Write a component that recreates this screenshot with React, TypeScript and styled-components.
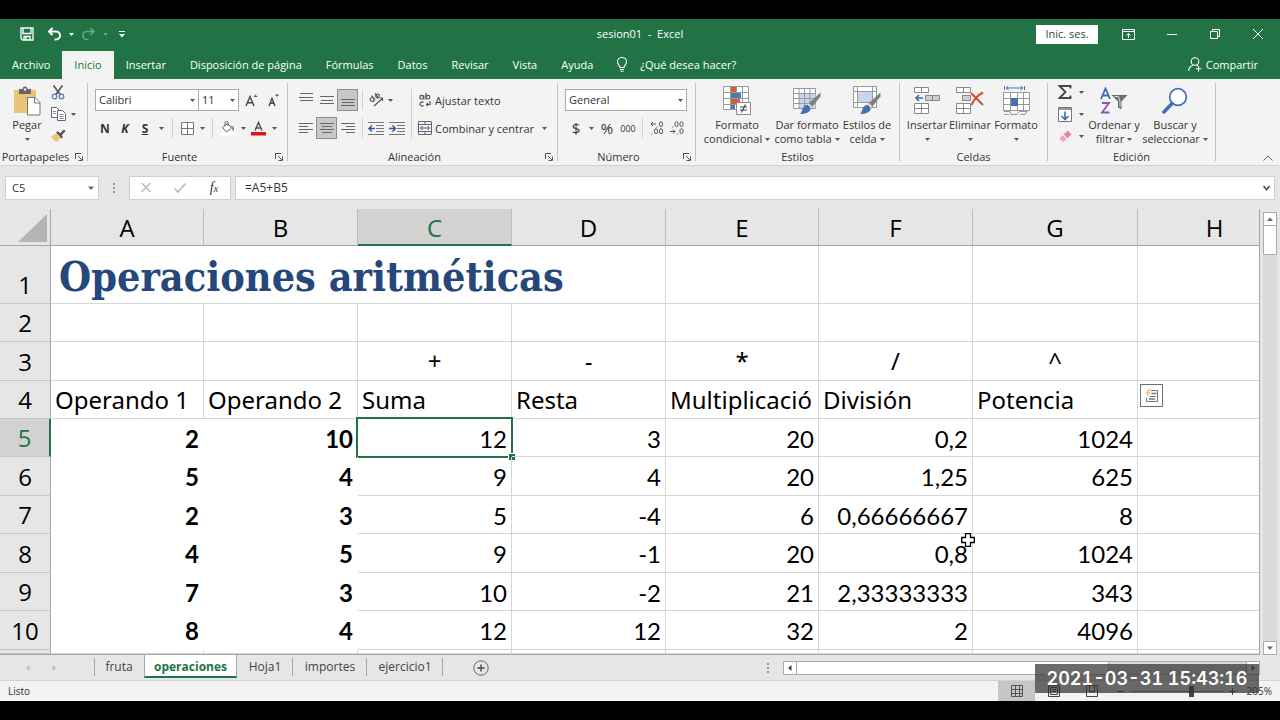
import React from "react";
import styled, { createGlobalStyle, css } from "styled-components";

const UI = `"Open Sans", "Noto Sans", sans-serif`;
const GREEN = "#217346";
const LINE = "#d6d6d6";
const EDGE = "#a6a6a6";

const GlobalStyle = createGlobalStyle`
  * { box-sizing: border-box; }
  html, body { margin: 0; padding: 0; background: #000; }
  body { font-family: ${UI}; font-size: 11px; color: #333; }
  button, input, select { font: inherit; color: inherit; margin: 0; }
  button { background: none; border: 0; padding: 0; cursor: default; white-space: nowrap; }
  svg { display: block; flex: none; }
`;

const Screen = styled.div`
  position: relative;
  display: flex;
  flex-direction: column;
  min-height: 100vh;
  padding: 19px 0;
  background: #000;
`;

/* ---------- title bar and tabs ---------- */

const TitleBar = styled.header`
  display: grid;
  grid-template-columns: 1fr auto 1fr;
  align-items: center;
  height: 32px;
  padding-bottom: 2px;
  background: ${GREEN};
  color: #fff;
`;

const QuickAccess = styled.div`
  display: flex;
  align-items: center;
  padding-left: 17px;
`;

const DocTitle = styled.h1`
  margin: 0;
  padding-bottom: 2px;
  font-size: 11px;
  font-weight: 400;
  white-space: pre;
`;

const WindowControls = styled.div`
  display: flex;
  align-items: center;
  justify-content: flex-end;
`;

const IconButton = styled.button<{ $w?: number; $h?: number; $on?: boolean; $dim?: boolean }>`
  display: flex;
  align-items: center;
  justify-content: center;
  flex: none;
  width: ${(p) => p.$w ?? 20}px;
  height: ${(p) => p.$h ?? 22}px;
  opacity: ${(p) => (p.$dim ? 0.35 : 1)};
  ${(p) =>
    p.$on &&
    css`
      background: #c8c8c8;
      border: 1px solid #8f8f8f;
    `}
`;

const SignIn = styled.button`
  width: 62px;
  height: 19px;
  margin-right: 8px;
  padding-bottom: 2px;
  background: #fff;
  color: #2b4a39;
`;

const TabBar = styled.nav`
  display: flex;
  align-items: stretch;
  height: 28px;
  background: ${GREEN};
  color: #fff;
`;

const Tab = styled.button<{ $active?: boolean }>`
  padding: 0 12px 2px;
  background: ${(p) => (p.$active ? "#f3f3f3" : "transparent")};
  color: ${(p) => (p.$active ? GREEN : "#fff")};
`;

const TellMe = styled.button`
  display: flex;
  align-items: center;
  gap: 12px;
  padding: 0 0 2px 11px;
`;

const Share = styled.button`
  display: flex;
  align-items: center;
  gap: 4px;
  margin-left: auto;
  padding: 0 22px 2px 0;
`;

/* ---------- ribbon ---------- */

const Ribbon = styled.div`
  display: flex;
  align-items: stretch;
  height: 87px;
  padding: 4px 0 4px;
  background: #f3f3f3;
  border-bottom: 1px solid #d2d2d2;
`;

const Group = styled.section<{ $w: number }>`
  display: flex;
  flex-direction: column;
  flex: none;
  width: ${(p) => p.$w}px;
  border-right: 1px solid #c4c4c4;
`;

const GroupBody = styled.div<{ $pad?: number }>`
  display: flex;
  flex: 1;
  min-height: 0;
  padding-left: ${(p) => p.$pad ?? 6}px;
`;

const GroupFooter = styled.div<{ $launcher?: boolean }>`
  display: grid;
  grid-template-columns: ${(p) => (p.$launcher ? "1fr 16px" : "1fr")};
  align-items: center;
  flex: none;
  height: 14px;
  margin-bottom: -3px;
  text-align: center;
  line-height: 14px;
  white-space: nowrap;
`;

const LauncherButton = styled.button`
  display: flex;
  justify-content: center;
`;

const Rows = styled.div`
  display: flex;
  flex-direction: column;
  gap: 6px;
  padding-top: 6px;
`;

const Row = styled.div`
  display: flex;
  align-items: center;
  height: 22px;
`;

const Tools = styled.div`
  display: flex;
  flex-direction: column;
  margin-top: -2px;
`;

const Divider = styled.span<{ $w?: number; $h?: number }>`
  display: flex;
  flex: none;
  justify-content: center;
  width: ${(p) => p.$w ?? 10}px;
  height: ${(p) => p.$h ?? 20}px;
  &::before {
    content: "";
    width: 1px;
    height: 100%;
    background: #d0d0d0;
  }
`;

const BigButton = styled.button<{ $w: number }>`
  display: flex;
  flex-direction: column;
  align-items: center;
  flex: none;
  width: ${(p) => p.$w}px;
  padding-top: 2px;
  line-height: 14px;
`;

const BigIcon = styled.span`
  display: flex;
  align-items: center;
  justify-content: center;
  height: 31px;
  margin-bottom: 2px;
`;

const BigLine = styled.span`
  display: flex;
  align-items: center;
  gap: 3px;
  height: 14px;
`;

const TextButton = styled.button`
  display: flex;
  align-items: center;
  height: 22px;
`;

const SelectBox = styled.span<{ $w: number }>`
  position: relative;
  display: flex;
  align-items: center;
  width: ${(p) => p.$w}px;
  height: 22px;
  & > svg {
    position: absolute;
    right: 4px;
    pointer-events: none;
  }
  & + & {
    margin-left: -1px;
  }
`;

const Select = styled.select`
  appearance: none;
  width: 100%;
  height: 100%;
  padding: 0 3px 2px;
  background: #fff;
  border: 1px solid #ababab;
  border-radius: 0;
`;

const Letter = styled.span<{ $italic?: boolean; $underline?: boolean }>`
  font-size: 12px;
  font-weight: 700;
  font-style: ${(p) => (p.$italic ? "italic" : "normal")};
  text-decoration: ${(p) => (p.$underline ? "underline" : "none")};
`;

const Currency = styled.span`
  font-size: 15px;
`;

const Thousands = styled.span`
  font-size: 9px;
`;

const Collapse = styled.button`
  align-self: flex-end;
  margin-left: auto;
  padding-right: 7px;
`;

/* ---------- formula bar ---------- */

const FormulaBar = styled.div`
  display: flex;
  align-items: center;
  height: 43px;
  padding: 0 5px;
  background: #e6e6e6;
`;

const Field = styled.label<{ $w?: number }>`
  display: flex;
  align-items: center;
  flex: ${(p) => (p.$w ? "none" : "1")};
  width: ${(p) => (p.$w ? p.$w + "px" : "auto")};
  height: 24px;
  padding-right: 4px;
  background: #fff;
  border: 1px solid #cfcfcf;
`;

const FieldInput = styled.input<{ $pad: number; $size: number }>`
  flex: 1;
  min-width: 0;
  padding: 0 0 0 ${(p) => p.$pad}px;
  border: 0;
  background: transparent;
  font-size: ${(p) => p.$size}px;
  outline: none;
`;

const Dots = styled.span`
  display: flex;
  flex: none;
  justify-content: center;
  width: 30px;
`;

const FxBox = styled.div`
  display: flex;
  align-items: center;
  flex: none;
  width: 102px;
  height: 24px;
  margin-right: 4px;
  background: #fff;
  border: 1px solid #cfcfcf;
`;

const FxText = styled.span`
  font-family: "Liberation Serif", serif;
  font-size: 14px;
  font-style: italic;
  & > small {
    font-size: 10px;
  }
`;

/* ---------- sheet ---------- */

const SheetArea = styled.main`
  display: flex;
  flex: 1;
  background: #e6e6e6;
`;

const Pane = styled.div`
  position: relative;
  flex: 1;
  min-width: 0;
  overflow: hidden;
  background: #fff;
  border-right: 1px solid ${EDGE};
  border-bottom: 1px solid ${EDGE};
`;

const Sheet = styled.table`
  width: 100%;
  min-width: 1292px;
  table-layout: fixed;
  border-collapse: separate;
  border-spacing: 0;
  color: #000;
  font-size: 24px;
  line-height: 30px;
`;

const Col = styled.col<{ $w?: number }>`
  width: ${(p) => (p.$w ? p.$w + "px" : "auto")};
`;

const SheetRow = styled.tr<{ $h: number }>`
  height: ${(p) => p.$h}px;
`;

const Corner = styled.td`
  padding: 0 3px 3px 0;
  vertical-align: bottom;
  background: #e6e6e6;
  border-right: 1px solid ${EDGE};
  border-bottom: 1px solid ${EDGE};
  & > svg {
    margin-left: auto;
  }
`;

const ColHead = styled.th<{ $on?: boolean }>`
  padding: 2px 0 0;
  font-weight: 400;
  background: ${(p) => (p.$on ? "#d2d2d2" : "#e6e6e6")};
  color: ${(p) => (p.$on ? GREEN : "#000")};
  border-right: 1px solid #bcbcbc;
  border-bottom: ${(p) => (p.$on ? `2px solid ${GREEN}` : `1px solid ${EDGE}`)};
`;

const RowHead = styled.th<{ $on?: boolean }>`
  padding: 0 0 3px;
  vertical-align: bottom;
  font-weight: 400;
  background: ${(p) => (p.$on ? "#d2d2d2" : "#e6e6e6")};
  color: ${(p) => (p.$on ? GREEN : "#000")};
  border-bottom: 1px solid #c6c6c6;
  border-right: ${(p) => (p.$on ? `2px solid ${GREEN}` : `1px solid ${EDGE}`)};
`;

const Cell = styled.td<{ $align?: string; $bold?: boolean; $filled?: boolean }>`
  position: relative;
  padding: 0 4px;
  font-family: "Noto Sans", sans-serif;
  text-align: ${(p) => p.$align ?? "left"};
  font-weight: ${(p) => (p.$bold ? 700 : 400)};
  white-space: nowrap;
  border-right: 1px solid ${(p) => (p.$filled ? "#fff" : LINE)};
  border-bottom: 1px solid ${(p) => (p.$filled ? "#fff" : LINE)};
`;

const NumberCell = styled(Cell)`
  padding-top: 2px;
  font-family: Lato, "Noto Sans", sans-serif;
`;

const TitleCell = styled.td`
  padding: 5px 0 0 8px;
  color: #26477c;
  font-family: "DejaVu Serif Condensed", "DejaVu Serif", serif;
  font-size: 41px;
  font-weight: 700;
  line-height: 52px;
  white-space: nowrap;
  border-right: 1px solid ${LINE};
  border-bottom: 1px solid ${LINE};
`;

const Selection = styled.span`
  position: absolute;
  inset: -2px;
  border: 2px solid ${GREEN};
  &::after {
    content: "";
    position: absolute;
    right: -4px;
    bottom: -4px;
    width: 6px;
    height: 6px;
    background: ${GREEN};
    border: 1px solid #fff;
    border-width: 1px 0 0 1px;
  }
`;

const QuickAnalysis = styled.button`
  position: absolute;
  top: 3px;
  left: 2px;
  display: flex;
  align-items: center;
  justify-content: center;
  width: 23px;
  height: 23px;
  background: #fff;
  border: 1px solid #5d7869;
`;

const Pointer = styled.span`
  position: absolute;
  left: 961px;
  top: 324px;
`;

const VScroll = styled.div`
  display: flex;
  flex-direction: column;
  flex: none;
  width: 20px;
  padding: 3px 3px 0;
`;

const ScrollButton = styled.button`
  display: flex;
  align-items: center;
  justify-content: center;
  flex: none;
  width: 14px;
  height: 14px;
  background: #fff;
  border: 1px solid #ababab;
`;

const VTrack = styled.div`
  flex: 1;
  background: #dadada;
`;

const VThumb = styled.div`
  height: 29px;
  background: #fff;
  border: 1px solid #ababab;
  border-top: 0;
`;

/* ---------- sheet tabs and status ---------- */

const SheetTabs = styled.div`
  display: flex;
  height: 25px;
  background: #e6e6e6;
  font-size: 12px;
  color: #444;
`;

const TabArrows = styled.div`
  display: flex;
  align-items: center;
  flex: none;
  width: 94px;
  padding-left: 18px;
`;

const SheetTab = styled.button<{ $w: number; $active?: boolean; $first?: boolean }>`
  flex: none;
  width: ${(p) => p.$w}px;
  height: 23px;
  ${(p) =>
    p.$active
      ? css`
          padding-top: 2px;
          background: #fff;
          color: ${GREEN};
          font-weight: 700;
          border-bottom: 2px solid ${GREEN};
          border-left: 1px solid ${EDGE};
          border-right: 1px solid ${EDGE};
        `
      : css`
          background: linear-gradient(#a6a6a6, #a6a6a6) ${p.$first ? "left" : "right"} center / 1px 18px no-repeat;
        `}
`;

const AddSheet = styled.button`
  width: 76px;
  display: flex;
  align-items: center;
  justify-content: center;
`;

const SplitDots = styled.span`
  display: flex;
  align-items: center;
  margin-left: auto;
  padding-right: 14px;
`;

const HScroll = styled.div`
  display: flex;
  align-items: center;
  flex: none;
  width: 477px;
  margin-right: 20px;
`;

const HTrack = styled.div`
  flex: 1;
  height: 14px;
  background: #dadada;
  border: solid #ababab;
  border-width: 1px 0;
`;

const HThumb = styled.div`
  width: 312px;
  height: 12px;
  background: #fff;
  border-right: 1px solid #ababab;
`;

const StatusBar = styled.footer`
  display: flex;
  align-items: center;
  height: 21px;
  padding: 0 8px;
  background: #f3f3f3;
  border-top: 1px solid #d2d2d2;
  font-size: 10px;
`;

const Views = styled.div`
  display: flex;
  margin-left: auto;
`;

const ViewButton = styled(IconButton)`
  background: ${(p) => (p.$on ? "#c6c6c6" : "transparent")};
  border: 0;
`;

const Zoom = styled.label`
  display: flex;
  align-items: center;
`;

const Slider = styled.input`
  appearance: none;
  width: 92px;
  height: 12px;
  margin: 0 2px;
  background: linear-gradient(#8a8a8a, #8a8a8a) center / 100% 1px no-repeat;
  &::-webkit-slider-thumb {
    appearance: none;
    width: 5px;
    height: 11px;
    background: #444;
  }
`;

const Percent = styled.span`
  width: 33px;
  text-align: right;
`;

const Stamp = styled.time`
  position: absolute;
  right: 21px;
  bottom: 27px;
  width: 224px;
  height: 29px;
  background: rgba(50, 50, 50, 0.72);
  color: #fff;
  font-family: Inter, "Open Sans", sans-serif;
  font-size: 18px;
  font-weight: 600;
  font-variant-numeric: tabular-nums;
  line-height: 29px;
  text-align: center;
  white-space: nowrap;
`;

/* ---------- drawings ---------- */

const Caret = ({ color = "#555" }: { color?: string }) => (
  <svg width="5" height="3" viewBox="0 0 5 3">
    <path d="M0 0h5L2.5 3z" fill={color} />
  </svg>
);

const Launcher = () => (
  <svg width="8" height="8" viewBox="0 0 8 8" fill="none" stroke="#555">
    <path d="M.5 6V.5H6M3 3l4 4M7.500 3.500v4h-4" />
  </svg>
);

const Lines = ({ rows, color = "#666" }: { rows: [number, number, number][]; color?: string }) => (
  <svg width="14" height="14" viewBox="0 0 14 14" stroke={color}>
    {rows.map(([y, a, b]) => (
      <path key={y} d={`M${a} ${y}.5H${b}`} />
    ))}
  </svg>
);

const SaveIcon = () => (
  <svg width="14" height="14" viewBox="0 0 14 14" fill="none" stroke="#fff" strokeWidth="1.300">
    <path d="M1 1h12v12H2.500L1 11.500zM3 1v5.500h8V1M4 13V9.500h6V13M6 10v2.500" />
  </svg>
);

const UndoIcon = () => (
  <svg width="15" height="14" viewBox="0 0 15 14" fill="none" stroke="#fff" strokeWidth="2">
    <path d="M5.500 1L2 4.500 5.500 8M2 4.500h7a4 4 0 0 1 0 8H7.500" />
  </svg>
);

const RedoIcon = () => (
  <svg width="15" height="14" viewBox="0 0 15 14" fill="none" stroke="#fff" strokeWidth="1.600">
    <path d="M9.500 1L13 4.500 9.500 8M13 4.500H6a4 4 0 0 0 0 8h1.500" />
  </svg>
);

const CustomizeIcon = () => (
  <svg width="6" height="7" viewBox="0 0 6 7" fill="#fff">
    <path d="M0 0h6v1H0zM0 3h6L3 6.500z" />
  </svg>
);

const RibbonOptions = () => (
  <svg width="13" height="11" viewBox="0 0 13 11" fill="none" stroke="#fff">
    <path d="M.5.5h12v10H.5zM.5 2.500h12M6.500 9V4.500M4.500 6.500l2-2 2 2" />
  </svg>
);

const Minimize = () => (
  <svg width="10" height="10" viewBox="0 0 10 10" stroke="#fff">
    <path d="M0 5.500h10" />
  </svg>
);

const Restore = () => (
  <svg width="10" height="10" viewBox="0 0 10 10" fill="none" stroke="#fff">
    <path d="M.5 2.500h7v7h-7zM2.500 2.500v-2h7v7h-2" />
  </svg>
);

const Close = () => (
  <svg width="10" height="10" viewBox="0 0 10 10" stroke="#fff">
    <path d="M0 0l10 10M10 0L0 10" />
  </svg>
);

const Bulb = () => (
  <svg width="12" height="15" viewBox="0 0 12 15" fill="none" stroke="#fff" strokeWidth="1.100">
    <path d="M4 10.500C4 8.500 1.500 7.500 1.500 4.800a4.500 4.300 0 0 1 9 0C10.500 7.500 8 8.500 8 10.500zM4 12.500h4M4.500 14.200h3" />
  </svg>
);

const Person = () => (
  <svg width="14" height="15" viewBox="0 0 14 15" fill="none" stroke="#fff" strokeWidth="1.100">
    <circle cx="7" cy="4.500" r="3.800" />
    <path d="M.7 14c0-3 1.800-5 4.300-5.800M9 8.200l1 .6M10.500 9v5.500M7.800 11.800h5.500" />
  </svg>
);

const PasteIcon = () => (
  <svg width="28" height="30" viewBox="0 0 28 30">
    <path d="M1 4h22v23H1z" fill="#e9c47a" />
    <path d="M6 3h3.500a2.500 2.500 0 0 1 5 0H18v5H6z" fill="#666" />
    <circle cx="12" cy="3.500" r="1.200" fill="#f3f3f3" />
    <path d="M14.500 11.500h7.500l5 5v12.500H14.500z" fill="#fff" stroke="#777" />
    <path d="M21.500 11.500v5.500H27" fill="none" stroke="#777" />
  </svg>
);

const CutIcon = () => (
  <svg width="14" height="15" viewBox="0 0 14 15" fill="none">
    <path d="M2.500.5l7 9.500M11.500.5l-7 9.500" stroke="#555" strokeWidth="1.600" />
    <circle cx="3.500" cy="11.500" r="2.300" stroke="#5b7aa5" strokeWidth="1.200" />
    <circle cx="10.500" cy="11.500" r="2.300" stroke="#5b7aa5" strokeWidth="1.200" />
  </svg>
);

const CopyIcon = () => (
  <svg width="15" height="14" viewBox="0 0 15 14" fill="#fff" stroke="#666">
    <path d="M.5.5h5l2.500 2.500v7.500H.5z" />
    <path d="M2 4.500h3M2 6.500h3" stroke="#6c8bb5" />
    <path d="M6.500 3.500h5l3 3v7h-8z" />
    <path d="M8.500 7.500h4M8.500 9.500h4M8.500 11.500h4" stroke="#6c8bb5" />
  </svg>
);

const BrushIcon = () => (
  <svg width="15" height="13" viewBox="0 0 15 13">
    <path d="M0 7.500l5-3 4.500 5L6 13C3.500 12 1.500 10 0 7.500z" fill="#e9c47a" />
    <path d="M5 3.500l1.800-1.300L9 4.200 13 .5l1.500 1.800-3.700 3.700 1.200 2.200-1.700 1.300z" fill="#555" />
  </svg>
);

const GrowFont = ({ up }: { up?: boolean }) => (
  <svg width="14" height="15" viewBox="0 0 14 15" fill="none">
    <path
      d={up ? "M1 13L5 3.500 9 13M2.500 9.700h5" : "M2 13l3-7.500L8 13M3 10.300h4"}
      stroke="#444"
      strokeWidth="1.400"
    />
    <path d={up ? "M8.500 4l2-2.500 2 2.500z" : "M8 1.500h4L10 4z"} fill={up ? "#44638f" : "#555"} />
  </svg>
);

const BorderIcon = () => (
  <svg width="13" height="13" viewBox="0 0 13 13" fill="#fff" stroke="#777">
    <path d="M.5.5h12v12H.5zM6.500.5v12M.5 6.500h12" />
  </svg>
);

const FillIcon = () => (
  <svg width="16" height="15" viewBox="0 0 16 15" fill="none">
    <path d="M1 11h14v3.500H1z" fill="#fff" />
    <path d="M2.500 6.500l5-4 4 4.500-5 4z" fill="#fff" stroke="#666" />
    <path d="M5 5V1.500a1.500 1.500 0 0 1 3 0V5" stroke="#666" />
    <path d="M10.500 4.500c3 .5 4 2.500 3 5.500-1-.5-1.500-2-1-3.500z" fill="#44638f" />
  </svg>
);

const FontColorIcon = () => (
  <svg width="15" height="15" viewBox="0 0 15 15" fill="none">
    <path d="M4 9.500L7.500 1.500 11 9.500M5.200 7h4.600" stroke="#555" strokeWidth="1.500" />
    <path d="M0 11h15v3.500H0z" fill="#e0141e" />
  </svg>
);

const OrientIcon = () => (
  <svg width="15" height="14" viewBox="0 0 15 14" fill="none" stroke="#555" strokeWidth="1.200">
    <circle cx="3.200" cy="6.500" r="2" />
    <path d="M2.500 2.500l3.500 4.500M6 .3l3.200 4.700" />
    <circle cx="8.500" cy="3" r="1.800" />
    <path d="M5 13l8.500-7.500M10.500 5h3v3" />
  </svg>
);

const IndentIcon = ({ out }: { out?: boolean }) => (
  <svg width="16" height="13" viewBox="0 0 16 13" fill="none">
    <path d="M0 .5h16M8 3.500h8M8 6.500h8M8 9.500h8M0 12.500h16" stroke="#777" />
    <path d={out ? "M7 6.500H1M4 3.500l-3 3 3 3" : "M0 6.500h6M3.500 3.500l3 3-3 3"} stroke="#355b94" strokeWidth="1.500" />
  </svg>
);

const WrapIcon = () => (
  <svg width="12" height="14" viewBox="0 0 12 14" fill="none" stroke="#555" strokeWidth="1.200">
    <circle cx="2.700" cy="4.200" r="1.800" />
    <path d="M4.800 2.500v4M7 0v6.500" />
    <circle cx="9" cy="4.200" r="1.800" />
    <path d="M4.500 9.500a2 2 0 1 0 0 3M11 8v3.500H7.500M9 10l-1.500 1.500L9 13" />
  </svg>
);

const MergeIcon = () => (
  <svg width="14" height="14" viewBox="0 0 14 14" fill="none" stroke="#666">
    <path d="M.5.5h13v13H.5zM.5 3.500h13M.5 10.500h13M7 .5v3M7 10.500v3" />
    <path d="M2.500 7h9M4.500 5l-2 2 2 2M9.500 5l2 2-2 2" stroke="#355b94" />
  </svg>
);

const DecimalIcon = ({ more }: { more?: boolean }) => (
  <svg width="15" height="14" viewBox="0 0 15 14" fill="none" stroke="#555">
    {more ? (
      <>
        <path d="M6 3H1M3 1L1 3l2 2" stroke="#355b94" />
        <path d="M7 5.500l-.5 1M2 12.500l-.5 1" />
        <ellipse cx="11" cy="3.200" rx="1.600" ry="2.500" />
        <ellipse cx="6" cy="10.200" rx="1.600" ry="2.500" />
        <ellipse cx="11" cy="10.200" rx="1.600" ry="2.500" />
      </>
    ) : (
      <>
        <path d="M0 10.500h5M3 8.500l2 2-2 2" stroke="#355b94" />
        <path d="M3 5.500l-.5 1M8 12.500l-.5 1" />
        <ellipse cx="6.500" cy="3.200" rx="1.600" ry="2.500" />
        <ellipse cx="11.500" cy="3.200" rx="1.600" ry="2.500" />
        <ellipse cx="11.500" cy="10.200" rx="1.600" ry="2.500" />
      </>
    )}
  </svg>
);

const CondIcon = () => (
  <svg width="28" height="29" viewBox="0 0 28 29">
    <path d="M.5.5h25v23H.5z" fill="#fff" stroke="#999" />
    <path d="M7.500.5v23M13.500.5v23M19.500.5v23M.5 6.500h25M.5 12.500h25M.5 18.500h25" stroke="#999" />
    <path d="M8 1h5v5H8zM8 13h9v5H8z" fill="#d85c41" />
    <path d="M8 7h10v5H8zM8 19h4v4H8z" fill="#4f7cae" />
    <path d="M13.500 16.500h14v12h-14z" fill="#fff" stroke="#888" />
    <path d="M17 21h7M17 24h7M22.500 18.500l-4 8" stroke="#444" strokeWidth="1.200" />
  </svg>
);

const Brush = () => (
  <>
    <path d="M27.500 6.500v4l-8 10-3.500-3.500z" fill="#808080" />
    <path d="M15.500 17.500l3.500 3.500-1.500 2-4-4z" fill="#fff" stroke="#888" strokeWidth=".6" />
    <path d="M13.500 19c2.500 0 4.500 2 4 4.500-1.500 3.500-5.500 4.500-10.500 4.500 2.500-2 2-8 6.500-9z" fill="#4472b0" />
  </>
);

const TableIcon = () => (
  <svg width="28" height="29" viewBox="0 0 28 29">
    <path d="M.5 2.500h22v20H.5z" fill="#fff" stroke="#999" />
    <path d="M6 8h16.500v14H6z" fill="#c5d7ea" />
    <path d="M6 2.500v20M11.500 2.500v20M17 2.500v20M.5 7.500h22M.5 12.500h22M.5 17.500h22" stroke="#999" />
    <Brush />
  </svg>
);

const StyleIcon = () => (
  <svg width="28" height="29" viewBox="0 0 28 29">
    <path d="M.5.5h23v21H.5z" fill="#fff" stroke="#999" />
    <path d="M4.500.5v21M19.500.5v21M.5 5.500h23M.5 16.500h23" stroke="#999" />
    <path d="M5 6h14v10H5z" fill="#c5d7ea" />
    <Brush />
  </svg>
);

const InsertIcon = () => (
  <svg width="26" height="28" viewBox="0 0 26 28" fill="none" stroke="#888">
    <path d="M.5.500h14v5H.5zM7.500.500v5M.5 16.500h14v10H.5zM7.500 16.500v10M.5 21.500h14" fill="#fff" />
    <path d="M11.500 8.500h14v5h-14zM18.500 8.500v5" fill="#cfcfcf" />
    <path d="M9 11H2M5 8l-3 3 3 3" stroke="#3b6cb0" strokeWidth="1.600" />
  </svg>
);

const DeleteIcon = () => (
  <svg width="28" height="28" viewBox="0 0 28 28" fill="none" stroke="#888">
    <path d="M.5.500h14v5H.5zM7.500.500v5M.5 16.500h14v10H.5zM7.500 16.500v10M.5 21.500h14" fill="#fff" />
    <path d="M6.500 8.500h8v5h-8z" fill="#cfcfcf" />
    <path d="M15 6l12 12M27 5.500C22 8 18 12 15.500 18" stroke="#d14f32" strokeWidth="2" />
  </svg>
);

const FormatIcon = () => (
  <svg width="27" height="30" viewBox="0 0 27 30" fill="none" stroke="#999">
    <path d="M.5 6.500h26v18H.5z" fill="#fff" />
    <path d="M7.500 6.500v18M14.500 6.500v18M20.500 6.500v18M.5 12.500h26M.5 18.500h26" />
    <path d="M8 12h7v8H8z" fill="#4472b0" stroke="none" />
    <path d="M1.500 0v4M21.500 0v4M3 2h17M5.500 0L3 2l2.500 2M17.500 0L20 2l-2.500 2" stroke="#4472b0" />
    <path d="M1 25.500h6l1 3h6l2-3h8l-2 3h-5M1 28.500h5" />
  </svg>
);

const SigmaIcon = () => (
  <svg width="14" height="14" viewBox="0 0 14 14" fill="none" stroke="#444" strokeWidth="1.800">
    <path d="M12.500 3.500V1H1.500l6 6-6 6h11v-2.500" />
  </svg>
);

const FillDownIcon = () => (
  <svg width="14" height="15" viewBox="0 0 14 15" fill="#fff" stroke="#777">
    <path d="M.5.5h13v14H.5z" />
    <path d="M1 2h12" stroke="#999" strokeWidth="2" />
    <path d="M7 4.500v8M3.500 9L7 12.500 10.500 9" fill="none" stroke="#3b6cb0" strokeWidth="1.600" />
  </svg>
);

const EraserIcon = () => (
  <svg width="13" height="12" viewBox="0 0 13 12">
    <path d="M4.500 4.500L9 .5l3.500 4L8 8.500z" fill="#ec84a0" />
    <path d="M4 5l3.500 4L5 11.500H3L.5 8.500z" fill="#f0a6b8" />
    <path d="M4.300 4.700L8 9" stroke="#fff" />
  </svg>
);

const SortIcon = () => (
  <svg width="28" height="28" viewBox="0 0 28 28" fill="none">
    <path d="M1 12L5.500 1.500 10 12M2.500 8.500h6" stroke="#3f6fb5" strokeWidth="1.800" />
    <path d="M2 16h7L2 25.500h7.500" stroke="#8a55b8" strokeWidth="1.800" />
    <path d="M11.500 8h16l-6 6.500v8l-3.500-2v-6z" fill="#6e6e6e" />
    <path d="M14.500 9.500h4l1.500 5v5" stroke="#ddd" />
  </svg>
);

const FindIcon = () => (
  <svg width="26" height="27" viewBox="0 0 26 27" fill="none">
    <circle cx="16" cy="10" r="8.300" fill="#fff" stroke="#3f6fb5" strokeWidth="1.700" />
    <path d="M10 16.500L2 25" stroke="#3f6fb5" strokeWidth="3.500" strokeLinecap="round" />
  </svg>
);

const CollapseIcon = () => (
  <svg width="10" height="6" viewBox="0 0 10 6" fill="none" stroke="#666">
    <path d="M.5 5.500L5 1l4.500 4.500" />
  </svg>
);

const ExpandIcon = () => (
  <svg width="7" height="6" viewBox="0 0 7 6" fill="none" stroke="#555" strokeWidth="1.800">
    <path d="M.5 1l3 3.500L6.500 1" />
  </svg>
);

const DotsIcon = () => (
  <svg width="2" height="10" viewBox="0 0 2 10" fill="#999">
    <path d="M0 0h2v2H0zM0 4h2v2H0zM0 8h2v2H0z" />
  </svg>
);

const CancelIcon = () => (
  <svg width="10" height="9" viewBox="0 0 10 9" stroke="#bdbdbd" strokeWidth="1.400">
    <path d="M.5 0l9 9M9.500 0l-9 9" />
  </svg>
);

const AcceptIcon = () => (
  <svg width="12" height="10" viewBox="0 0 12 10" fill="none" stroke="#bdbdbd" strokeWidth="1.800">
    <path d="M.7 5.500L4 9l7.500-8.500" />
  </svg>
);

const CornerIcon = () => (
  <svg width="29" height="28" viewBox="0 0 29 28">
    <path d="M29 0v28H0z" fill="#b4b4b4" />
  </svg>
);

const AnalysisIcon = () => (
  <svg width="15" height="15" viewBox="0 0 15 15" fill="none">
    <path d="M7 2.500h6.500v11h-11V10" stroke="#777" />
    <path d="M5 .5L1 6h2.500L2 10l5-6H4.500L7 .5z" fill="#f0c48a" />
    <path d="M7.500 5.500h5" stroke="#777" strokeWidth="1.500" />
    <path d="M6 8.500h6" stroke="#c8553d" />
    <path d="M5 11h6" stroke="#3c8c86" strokeWidth="1.500" />
  </svg>
);

const CrossPointer = () => (
  <svg width="14" height="14" viewBox="0 0 14 14">
    <path d="M4.500.7h5v3.800h3.800v5H9.500v3.800h-5V9.500H.7v-5h3.800z" fill="#fff" stroke="#000" strokeWidth="1.300" />
  </svg>
);

const Triangle = ({ d, color = "#666" }: { d: string; color?: string }) => (
  <svg width="6" height="6" viewBox="0 0 6 6">
    <path d={d} fill={color} />
  </svg>
);
const UP = "M0 5h6L3 1.500z";
const DOWN = "M0 1.500h6L3 5z";
const LEFT = "M4.500 0v6L1 3z";
const RIGHT = "M1.500 0v6L5 3z";

const PlusCircle = () => (
  <svg width="16" height="16" viewBox="0 0 16 16" fill="none" stroke="#666">
    <circle cx="8" cy="8" r="7.200" />
    <path d="M8 4.500v7M4.500 8h7" strokeWidth="1.800" />
  </svg>
);

const NormalView = () => (
  <svg width="12" height="12" viewBox="0 0 12 12" fill="none" stroke="#555">
    <path d="M.5.5h11v11H.5zM4.500.5v11M8.500.5v11M.5 4.500h11M.5 8.500h11" />
  </svg>
);

const PageView = () => (
  <svg width="12" height="12" viewBox="0 0 12 12" fill="none" stroke="#444">
    <path d="M.5.5h11v11H.5zM2.500 2.500h7v7h-7zM4 4.500h4M4 6.500h4" />
  </svg>
);

const BreakView = () => (
  <svg width="12" height="12" viewBox="0 0 12 12" fill="none" stroke="#444">
    <path d="M.5.5h11v11H.5zM3.500.5v6h5v-6" />
  </svg>
);

const ZoomSign = ({ plus }: { plus?: boolean }) => (
  <svg width="7" height="7" viewBox="0 0 7 7" stroke="#444">
    <path d={plus ? "M0 3.500h7M3.500 0v7" : "M0 3.500h7"} />
  </svg>
);

/* ---------- parts ---------- */

const GroupBox = ({
  w,
  name,
  pad,
  launcher,
  children,
}: {
  w: number;
  name: string;
  pad?: number;
  launcher?: boolean;
  children: React.ReactNode;
}) => (
  <Group $w={w} aria-label={name}>
    <GroupBody $pad={pad}>{children}</GroupBody>
    <GroupFooter $launcher={launcher}>
      <span>{name}</span>
      {launcher && (
        <LauncherButton type="button" aria-label={`Configuración de ${name}`}>
          <Launcher />
        </LauncherButton>
      )}
    </GroupFooter>
  </Group>
);

const Big = ({ w, icon, lines }: { w: number; icon: React.ReactNode; lines: [string, string] }) => (
  <BigButton type="button" $w={w}>
    <BigIcon>{icon}</BigIcon>
    <BigLine>{lines[0]}</BigLine>
    <BigLine>
      {lines[1]}
      <Caret />
    </BigLine>
  </BigButton>
);

const Drop = ({ w, label, h }: { w: number; label: string; h?: number }) => (
  <IconButton type="button" $w={w} $h={h} aria-label={label}>
    <Caret />
  </IconButton>
);

/* ---------- data ---------- */

const TABS = [
  "Archivo",
  "Inicio",
  "Insertar",
  "Disposición de página",
  "Fórmulas",
  "Datos",
  "Revisar",
  "Vista",
  "Ayuda",
];

const COLUMNS: { name: string; w?: number }[] = [
  { name: "A", w: 153 },
  { name: "B", w: 154 },
  { name: "C", w: 154 },
  { name: "D", w: 154 },
  { name: "E", w: 153 },
  { name: "F", w: 154 },
  { name: "G", w: 165 },
  { name: "H" },
];

const DATA: { n: number; h: number; v: string[] }[] = [
  { n: 5, h: 38, v: ["2", "10", "12", "3", "20", "0,2", "1024"] },
  { n: 6, h: 39, v: ["5", "4", "9", "4", "20", "1,25", "625"] },
  { n: 7, h: 38, v: ["2", "3", "5", "-4", "6", "0,66666667", "8"] },
  { n: 8, h: 39, v: ["4", "5", "9", "-1", "20", "0,8", "1024"] },
  { n: 9, h: 38, v: ["7", "3", "10", "-2", "21", "2,33333333", "343"] },
  { n: 10, h: 39, v: ["8", "4", "12", "12", "32", "2", "4096"] },
];

const OPERATORS = ["", "", "+", "-", "*", "/", "^"];
const HEADINGS = ["Operando 1", "Operando 2", "Suma", "Resta", "Multiplicació", "División", "Potencia"];

export default function App() {
  return (
    <Screen>
      <GlobalStyle />
      <TitleBar>
        <QuickAccess>
          <IconButton type="button" aria-label="Guardar">
            <SaveIcon />
          </IconButton>
          <IconButton type="button" $w={34} aria-label="Deshacer">
            <UndoIcon />
          </IconButton>
          <IconButton type="button" $w={0} aria-label="Opciones de deshacer">
            <Caret color="#fff" />
          </IconButton>
          <IconButton type="button" $w={34} $dim aria-label="Rehacer">
            <RedoIcon />
          </IconButton>
          <IconButton type="button" $w={0} $dim aria-label="Opciones de rehacer">
            <Caret color="#fff" />
          </IconButton>
          <IconButton type="button" $w={34} aria-label="Personalizar">
            <CustomizeIcon />
          </IconButton>
        </QuickAccess>
        <DocTitle>{"sesion01  -  Excel"}</DocTitle>
        <WindowControls>
          <SignIn type="button">Inic. ses.</SignIn>
          <IconButton type="button" $w={44} aria-label="Opciones de la cinta">
            <RibbonOptions />
          </IconButton>
          <IconButton type="button" $w={44} aria-label="Minimizar">
            <Minimize />
          </IconButton>
          <IconButton type="button" $w={42} aria-label="Restaurar">
            <Restore />
          </IconButton>
          <IconButton type="button" $w={44} aria-label="Cerrar">
            <Close />
          </IconButton>
        </WindowControls>
      </TitleBar>

      <TabBar>
        {TABS.map((t) => (
          <Tab key={t} type="button" $active={t === "Inicio"}>
            {t}
          </Tab>
        ))}
        <TellMe type="button">
          <Bulb />
          ¿Qué desea hacer?
        </TellMe>
        <Share type="button">
          <Person />
          Compartir
        </Share>
      </TabBar>

      <Ribbon>
        <GroupBox w={88} name="Portapapeles" launcher>
          <BigButton type="button" $w={42}>
            <BigIcon>
              <PasteIcon />
            </BigIcon>
            <BigLine>Pegar</BigLine>
            <BigLine>
              <Caret />
            </BigLine>
          </BigButton>
          <Tools>
            <IconButton type="button" aria-label="Cortar">
              <CutIcon />
            </IconButton>
            <Row>
              <IconButton type="button" aria-label="Copiar">
                <CopyIcon />
              </IconButton>
              <Drop w={10} label="Opciones de copia" />
            </Row>
            <IconButton type="button" $h={20} aria-label="Copiar formato">
              <BrushIcon />
            </IconButton>
          </Tools>
        </GroupBox>

        <GroupBox w={200} pad={7} name="Fuente" launcher>
          <Rows>
            <Row>
              <SelectBox $w={104}>
                <Select aria-label="Fuente">
                  <option>Calibri</option>
                </Select>
                <Caret />
              </SelectBox>
              <SelectBox $w={41}>
                <Select aria-label="Tamaño">
                  <option>11</option>
                </Select>
                <Caret />
              </SelectBox>
              <IconButton type="button" $w={26} aria-label="Aumentar fuente">
                <GrowFont up />
              </IconButton>
              <IconButton type="button" $w={18} aria-label="Disminuir fuente">
                <GrowFont />
              </IconButton>
            </Row>
            <Row>
              <IconButton type="button" aria-label="Negrita">
                <Letter>N</Letter>
              </IconButton>
              <IconButton type="button" aria-label="Cursiva">
                <Letter $italic>K</Letter>
              </IconButton>
              <IconButton type="button" aria-label="Subrayado">
                <Letter $underline>S</Letter>
              </IconButton>
              <Drop w={12} label="Opciones de subrayado" />
              <Divider />
              <IconButton type="button" aria-label="Bordes">
                <BorderIcon />
              </IconButton>
              <Drop w={10} label="Opciones de bordes" />
              <Divider />
              <IconButton type="button" $w={22} aria-label="Color de relleno">
                <FillIcon />
              </IconButton>
              <Drop w={8} label="Opciones de relleno" />
              <IconButton type="button" $w={22} aria-label="Color de fuente">
                <FontColorIcon />
              </IconButton>
              <Drop w={10} label="Opciones de color" />
            </Row>
          </Rows>
        </GroupBox>

        <GroupBox w={270} pad={7} name="Alineación" launcher>
          <Rows>
            <Row>
              <IconButton type="button" $w={21} aria-label="Alinear arriba">
                <Lines rows={[[0, 1, 14], [4, 0, 14], [7, 1, 14]]} />
              </IconButton>
              <IconButton type="button" $w={21} aria-label="Alinear al medio">
                <Lines rows={[[3, 0, 14], [7, 1, 13], [10, 0, 14]]} />
              </IconButton>
              <IconButton type="button" $w={21} $on aria-label="Alinear abajo">
                <Lines rows={[[6, 0, 14], [9, 1, 13], [12, 0, 14]]} />
              </IconButton>
              <Divider $w={8} />
              <IconButton type="button" aria-label="Orientación">
                <OrientIcon />
              </IconButton>
              <Drop w={8} label="Opciones de orientación" />
            </Row>
            <Row>
              <IconButton type="button" $w={21} aria-label="Alinear a la izquierda">
                <Lines rows={[[2, 0, 14], [5, 0, 9], [8, 0, 14], [11, 0, 9]]} />
              </IconButton>
              <IconButton type="button" $w={21} $on aria-label="Centrar">
                <Lines rows={[[2, 0, 14], [5, 2, 12], [8, 0, 14], [11, 2, 12]]} />
              </IconButton>
              <IconButton type="button" $w={21} aria-label="Alinear a la derecha">
                <Lines rows={[[2, 0, 14], [5, 5, 14], [8, 0, 14], [11, 5, 14]]} />
              </IconButton>
              <Divider $w={8} />
              <IconButton type="button" aria-label="Disminuir sangría">
                <IndentIcon out />
              </IconButton>
              <IconButton type="button" $w={21} aria-label="Aumentar sangría">
                <IndentIcon />
              </IconButton>
            </Row>
          </Rows>
          <Rows>
            <Divider $w={8} $h={50} />
          </Rows>
          <Rows>
            <TextButton type="button">
              <IconButton as="span">
                <WrapIcon />
              </IconButton>
              Ajustar texto
            </TextButton>
            <Row>
              <TextButton type="button">
                <IconButton as="span">
                  <MergeIcon />
                </IconButton>
                Combinar y centrar
              </TextButton>
              <Drop w={20} label="Opciones de combinar" />
            </Row>
          </Rows>
        </GroupBox>

        <GroupBox w={138} pad={7} name="Número" launcher>
          <Rows>
            <Row>
              <SelectBox $w={122}>
                <Select aria-label="Formato de número">
                  <option>General</option>
                </Select>
                <Caret />
              </SelectBox>
            </Row>
            <Row>
              <IconButton type="button" $w={22} aria-label="Moneda">
                <Currency>$</Currency>
              </IconButton>
              <Drop w={8} label="Opciones de moneda" />
              <IconButton type="button" $w={24} aria-label="Porcentaje">
                <Currency>%</Currency>
              </IconButton>
              <IconButton type="button" $w={18} aria-label="Millares">
                <Thousands>000</Thousands>
              </IconButton>
              <Divider />
              <IconButton type="button" aria-label="Aumentar decimales">
                <DecimalIcon more />
              </IconButton>
              <IconButton type="button" aria-label="Disminuir decimales">
                <DecimalIcon />
              </IconButton>
            </Row>
          </Rows>
        </GroupBox>

        <GroupBox w={204} name="Estilos">
          <Big w={70} icon={<CondIcon />} lines={["Formato", "condicional"]} />
          <Big w={70} icon={<TableIcon />} lines={["Dar formato", "como tabla"]} />
          <Big w={50} icon={<StyleIcon />} lines={["Estilos de", "celda"]} />
        </GroupBox>

        <GroupBox w={148} name="Celdas">
          <Big w={42} icon={<InsertIcon />} lines={["Insertar", ""]} />
          <Big w={44} icon={<DeleteIcon />} lines={["Eliminar", ""]} />
          <Big w={48} icon={<FormatIcon />} lines={["Formato", ""]} />
        </GroupBox>

        <GroupBox w={168} name="Edición">
          <Tools>
            <Row>
              <IconButton type="button" $w={22} aria-label="Autosuma">
                <SigmaIcon />
              </IconButton>
              <Drop w={10} label="Opciones de autosuma" />
            </Row>
            <Row>
              <IconButton type="button" $w={22} aria-label="Rellenar">
                <FillDownIcon />
              </IconButton>
              <Drop w={10} label="Opciones de rellenar" />
            </Row>
            <Row>
              <IconButton type="button" $w={22} $h={20} aria-label="Borrar">
                <EraserIcon />
              </IconButton>
              <Drop w={10} h={20} label="Opciones de borrar" />
            </Row>
          </Tools>
          <Big w={56} icon={<SortIcon />} lines={["Ordenar y", "filtrar"]} />
          <Big w={66} icon={<FindIcon />} lines={["Buscar y", "seleccionar"]} />
        </GroupBox>
        <Collapse type="button" aria-label="Contraer la cinta">
          <CollapseIcon />
        </Collapse>
      </Ribbon>

      <FormulaBar>
        <Field $w={94}>
          <FieldInput $pad={6} $size={11} defaultValue="C5" aria-label="Cuadro de nombres" />
          <Triangle d={DOWN} />
        </Field>
        <Dots>
          <DotsIcon />
        </Dots>
        <FxBox>
          <IconButton type="button" $w={32} aria-label="Cancelar">
            <CancelIcon />
          </IconButton>
          <IconButton type="button" $w={36} aria-label="Introducir">
            <AcceptIcon />
          </IconButton>
          <IconButton type="button" $w={32} aria-label="Insertar función">
            <FxText>
              f<small>x</small>
            </FxText>
          </IconButton>
        </FxBox>
        <Field>
          <FieldInput $pad={9} $size={12} defaultValue="=A5+B5" aria-label="Barra de fórmulas" />
          <ExpandIcon />
        </Field>
      </FormulaBar>

      <SheetArea>
        <Pane>
          <Sheet>
            <colgroup>
              <Col $w={51} />
              {COLUMNS.map((c) => (
                <Col key={c.name} $w={c.w} />
              ))}
            </colgroup>
            <thead>
              <SheetRow $h={37}>
                <Corner>
                  <CornerIcon />
                </Corner>
                {COLUMNS.map((c) => (
                  <ColHead key={c.name} scope="col" $on={c.name === "C"}>
                    {c.name}
                  </ColHead>
                ))}
              </SheetRow>
            </thead>
            <tbody>
              <SheetRow $h={58}>
                <RowHead scope="row">1</RowHead>
                <TitleCell colSpan={4}>Operaciones aritméticas</TitleCell>
                <Cell />
                <Cell />
                <Cell />
                <Cell />
              </SheetRow>
              <SheetRow $h={38}>
                <RowHead scope="row">2</RowHead>
                {COLUMNS.map((c) => (
                  <Cell key={c.name} />
                ))}
              </SheetRow>
              <SheetRow $h={39}>
                <RowHead scope="row">3</RowHead>
                {OPERATORS.map((o, i) => (
                  <Cell key={i} $align="center">
                    {o}
                  </Cell>
                ))}
                <Cell />
              </SheetRow>
              <SheetRow $h={38}>
                <RowHead scope="row">4</RowHead>
                {HEADINGS.map((t) => (
                  <Cell key={t}>{t}</Cell>
                ))}
                <Cell>
                  <QuickAnalysis type="button" aria-label="Análisis rápido">
                    <AnalysisIcon />
                  </QuickAnalysis>
                </Cell>
              </SheetRow>
              {DATA.map((r) => (
                <SheetRow key={r.n} $h={r.h}>
                  <RowHead scope="row" $on={r.n === 5}>
                    {r.n}
                  </RowHead>
                  {r.v.map((t, i) => (
                    <NumberCell key={i} $align="right" $bold={i < 2} $filled={i < 2}>
                      {t}
                      {r.n === 5 && i === 2 && <Selection />}
                    </NumberCell>
                  ))}
                  <Cell />
                </SheetRow>
              ))}
              <SheetRow $h={4}>
                <RowHead scope="row" aria-label="11" />
                {COLUMNS.map((c) => (
                  <Cell key={c.name} />
                ))}
              </SheetRow>
            </tbody>
          </Sheet>
          <Pointer>
            <CrossPointer />
          </Pointer>
        </Pane>
        <VScroll>
          <ScrollButton type="button" aria-label="Desplazar arriba">
            <Triangle d={UP} />
          </ScrollButton>
          <VTrack>
            <VThumb />
          </VTrack>
          <ScrollButton type="button" aria-label="Desplazar abajo">
            <Triangle d={DOWN} />
          </ScrollButton>
        </VScroll>
      </SheetArea>

      <SheetTabs>
        <TabArrows>
          <IconButton type="button" aria-label="Hoja anterior">
            <Triangle d={LEFT} color="#bdbdbd" />
          </IconButton>
          <IconButton type="button" $w={32} aria-label="Hoja siguiente">
            <Triangle d={RIGHT} color="#bdbdbd" />
          </IconButton>
        </TabArrows>
        <SheetTab type="button" $w={50} $first>
          fruta
        </SheetTab>
        <SheetTab type="button" $w={93} $active>
          operaciones
        </SheetTab>
        <SheetTab type="button" $w={56}>
          Hoja1
        </SheetTab>
        <SheetTab type="button" $w={74}>
          importes
        </SheetTab>
        <SheetTab type="button" $w={76}>
          ejercicio1
        </SheetTab>
        <AddSheet type="button" aria-label="Hoja nueva">
          <PlusCircle />
        </AddSheet>
        <SplitDots>
          <DotsIcon />
        </SplitDots>
        <HScroll>
          <ScrollButton type="button" aria-label="Desplazar a la izquierda">
            <Triangle d={LEFT} color="#444" />
          </ScrollButton>
          <HTrack>
            <HThumb />
          </HTrack>
          <ScrollButton type="button" aria-label="Desplazar a la derecha">
            <Triangle d={RIGHT} color="#444" />
          </ScrollButton>
        </HScroll>
      </SheetTabs>

      <StatusBar>
        <span>Listo</span>
        <Views>
          <ViewButton type="button" $w={37} $h={20} $on aria-label="Normal">
            <NormalView />
          </ViewButton>
          <ViewButton type="button" $w={38} $h={20} aria-label="Diseño de página">
            <PageView />
          </ViewButton>
          <ViewButton type="button" $w={38} $h={20} aria-label="Salto de página">
            <BreakView />
          </ViewButton>
        </Views>
        <IconButton type="button" $w={18} $h={20} aria-label="Alejar">
          <ZoomSign />
        </IconButton>
        <Zoom>
          <Slider type="range" min={0} max={100} defaultValue={67} aria-label="Zoom" />
        </Zoom>
        <IconButton type="button" $w={14} $h={20} aria-label="Acercar">
          <ZoomSign plus />
        </IconButton>
        <Percent>205%</Percent>
      </StatusBar>

      <Stamp>2021-03-31 15:43:16</Stamp>
    </Screen>
  );
}
